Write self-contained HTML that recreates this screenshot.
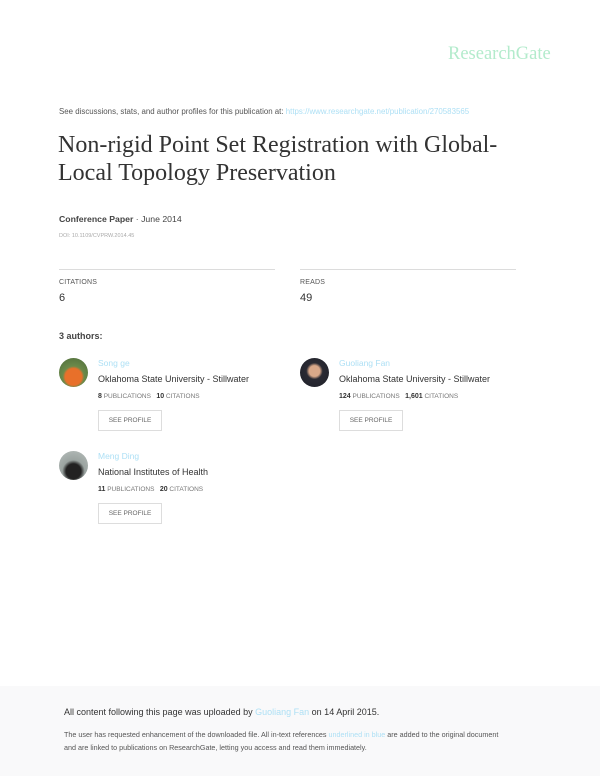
<!DOCTYPE html>
<html><head><meta charset="utf-8"><style>
*{margin:0;padding:0;box-sizing:border-box}
body{width:600px;height:776px;background:#fff;position:relative;font-family:"Liberation Sans",sans-serif;color:#333;overflow:hidden}
.a{position:absolute;white-space:nowrap}
.link{color:#aee0f5}
.hr{position:absolute;top:269px;height:1px;background:#dcdcdc;width:216px}
.sm{font-size:7px;color:#555;letter-spacing:.2px}
.av{position:absolute;width:29px;height:29px;border-radius:50%}
.btn{position:absolute;width:64px;height:21px;border:1px solid #ddd;font-size:6.5px;color:#666;text-align:center;line-height:19px}
.name{font-size:8.5px;color:#aee0f5}
.aff{font-size:9px;color:#333}
.st{font-size:6.5px;color:#777}
.st b{font-size:7px;color:#333}
</style></head><body>
<div class="a" style="left:448px;top:44px;font-size:18.5px;color:#b3ebcc;font-family:'Liberation Serif',serif">ResearchGate</div>
<div class="a" style="left:59px;top:107px;font-size:7.9px;color:#555">See discussions, stats, and author profiles for this publication at: <span class="link">https://www.researchgate.net/publication/270583565</span></div>
<div class="a" style="left:58px;top:131px;font-size:24px;line-height:28px;color:#333;font-family:'Liberation Serif',serif">Non-rigid Point Set Registration with Global-<br>Local Topology Preservation</div>
<div class="a" style="left:59px;top:214px;font-size:8.7px;color:#444"><b>Conference Paper</b> · June 2014</div>
<div class="a" style="left:59px;top:233px;font-size:5.5px;color:#aaa">DOI: 10.1109/CVPRW.2014.45</div>
<div class="hr" style="left:59px"></div><div class="hr" style="left:300px"></div>
<div class="a sm" style="left:59px;top:279px">CITATIONS</div>
<div class="a" style="left:59px;top:292px;font-size:11px">6</div>
<div class="a sm" style="left:300px;top:279px">READS</div>
<div class="a" style="left:300px;top:292px;font-size:11px">49</div>
<div class="a" style="left:59px;top:331px;font-size:9px;font-weight:bold;color:#444">3 authors:</div>

<div class="av" style="left:59px;top:358px;background:radial-gradient(circle at 50% 65%,#e8702a 0 35%,#6b8a4a 45%,#4d6b3a)"></div>
<div class="a name" style="left:98px;top:358px">Song ge</div>
<div class="a aff" style="left:98px;top:374px">Oklahoma State University - Stillwater</div>
<div class="a st" style="left:98px;top:393px"><b>8</b> PUBLICATIONS &nbsp; <b>10</b> CITATIONS</div>
<div class="btn" style="left:98px;top:410px">SEE PROFILE</div>

<div class="av" style="left:300px;top:358px;background:radial-gradient(circle at 50% 45%,#d9a889 0 25%,#2a2a33 38%,#1e2028)"></div>
<div class="a name" style="left:339px;top:358px">Guoliang Fan</div>
<div class="a aff" style="left:339px;top:374px">Oklahoma State University - Stillwater</div>
<div class="a st" style="left:339px;top:393px"><b>124</b> PUBLICATIONS &nbsp; <b>1,601</b> CITATIONS</div>
<div class="btn" style="left:339px;top:410px">SEE PROFILE</div>

<div class="av" style="left:59px;top:451px;background:radial-gradient(circle at 50% 70%,#222 0 30%,#9aa3a0 45%,#b8bfbc)"></div>
<div class="a name" style="left:98px;top:451px">Meng Ding</div>
<div class="a aff" style="left:98px;top:467px">National Institutes of Health</div>
<div class="a st" style="left:98px;top:486px"><b>11</b> PUBLICATIONS &nbsp; <b>20</b> CITATIONS</div>
<div class="btn" style="left:98px;top:503px">SEE PROFILE</div>

<div style="position:absolute;left:0;top:686px;width:600px;height:90px;background:#f9f9fa"></div>
<div class="a" style="left:64px;top:707px;font-size:9px;color:#333">All content following this page was uploaded by <span class="link">Guoliang Fan</span> on 14 April 2015.</div>
<div class="a" style="left:64px;top:730px;font-size:7.2px;color:#555">The user has requested enhancement of the downloaded file. All in-text references <span class="link">underlined in blue</span> are added to the original document</div>
<div class="a" style="left:64px;top:743px;font-size:7.2px;color:#555">and are linked to publications on ResearchGate, letting you access and read them immediately.</div>
</body></html>
